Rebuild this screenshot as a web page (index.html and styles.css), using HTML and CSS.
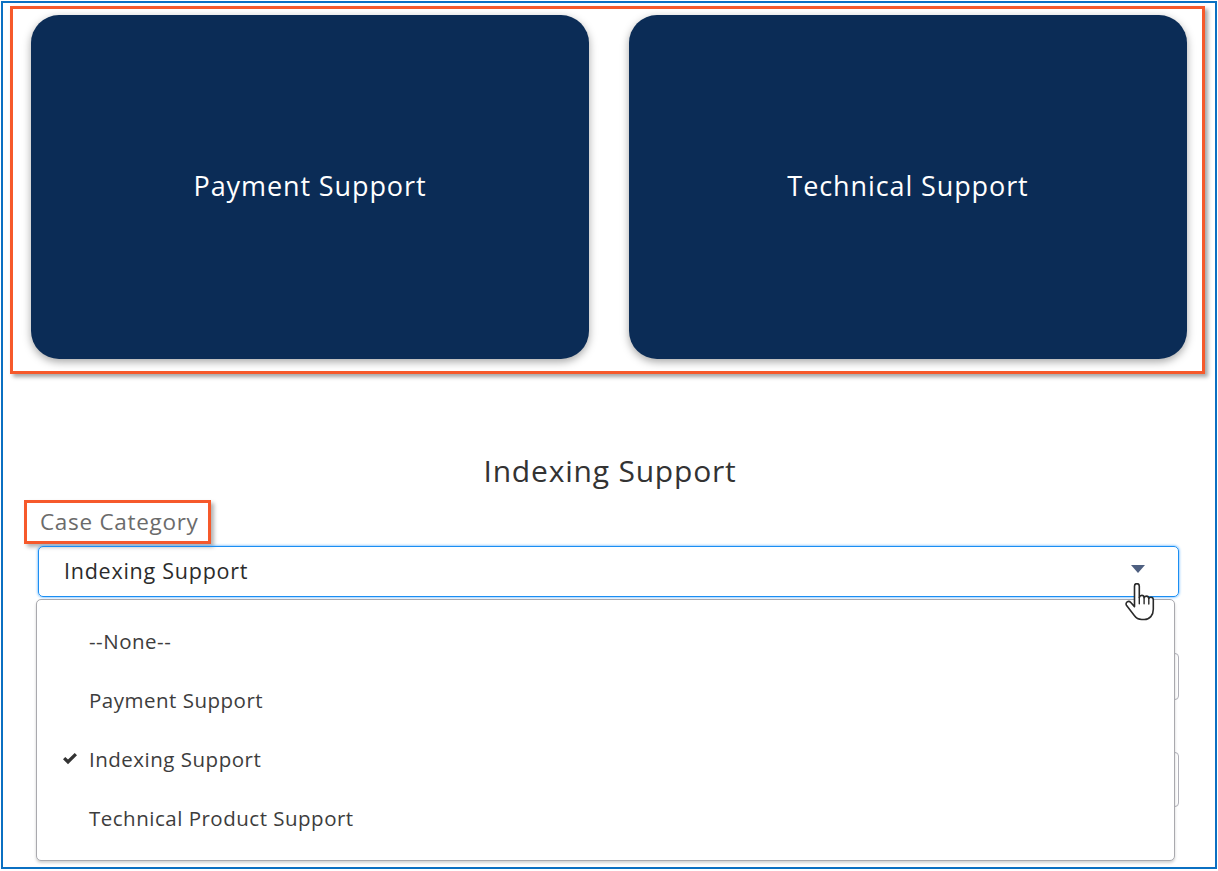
FILE: index.html
```html
<!DOCTYPE html>
<html lang="en">
<head>
<meta charset="utf-8">
<title>Case Category</title>
<link rel="stylesheet" href="styles.css">
</head>
<body>
<div class="frame">
  <div class="highlight">
    <div class="tiles">
      <div class="tile">Payment Support</div>
      <div class="tile">Technical Support</div>
    </div>
  </div>

  <h2 class="title">Indexing Support</h2>

  <div class="label-box"><span class="label">Case Category</span></div>

  <div class="form">
    <div class="select">
      <span class="select-value">Indexing Support</span>
      <svg class="caret" width="14" height="9" viewBox="0 0 14 9"><path d="M0 0H14L7 8Z" fill="#4e5f80"/></svg>
    </div>
    <div class="field field-1"></div>
    <div class="field field-2"></div>

    <ul class="menu">
      <li class="option">--None--</li>
      <li class="option">Payment Support</li>
      <li class="option selected"><svg class="check" width="16" height="13" viewBox="0 0 16 13"><path d="M1 7.2 L3.3 4.9 L6 7.6 L12.7 0.9 L15 3.2 L6 12.2 Z" fill="#333"/></svg>Indexing Support</li>
      <li class="option">Technical Product Support</li>
    </ul>

    <svg class="cursor" width="30" height="40" viewBox="0 0 30 40">
      <path d="M9.5 3.2c0-1.6 1.1-2.6 2.4-2.6s2.4 1 2.4 2.6v11.2c0.4-1.3 1.4-2 2.5-2s2.2 0.8 2.3 2.2c0.5-1 1.4-1.5 2.4-1.5 1.2 0 2.2 0.9 2.3 2.3 0.5-0.8 1.3-1.2 2.1-1.2 1.4 0 2.4 1.1 2.4 2.6v9.5c0 6-3.6 10.2-9 10.2h-2.6c-3.4 0-5.7-1.5-7.6-4.2L1.6 22.6c-0.9-1.3-0.6-2.9 0.6-3.7 1.2-0.8 2.6-0.5 3.6 0.6l3.7 4.1Z" fill="#fff" stroke="#2a2a2a" stroke-width="1.6" stroke-linejoin="round"/>
      <path d="M14.3 14.4v6.4M19.1 14.6v6.2M23.8 15.4v5.6" stroke="#2a2a2a" stroke-width="1.4" stroke-linecap="round"/>
    </svg>
  </div>
</div>
</body>
</html>
```

FILE: styles.css
```css
* { box-sizing: border-box; }

html, body {
  margin: 0;
  padding: 0;
  background: #ffffff;
}

body {
  font-family: "Open Sans", "Noto Sans", sans-serif;
  color: #333;
}

.frame {
  width: 1216px;
  height: 868px;
  margin: 1px 0 0 1px;
  border: 2px solid #0b70c2;
  overflow: hidden;
}

.highlight {
  width: 1195px;
  height: 368px;
  margin: 3px 0 0 7px;
  border: 3px solid #f6592b;
  box-shadow: 3px 3px 4px rgba(0, 0, 0, 0.35);
  padding: 6px 15px 0 18px;
}

.tiles {
  display: flex;
  gap: 40px;
}

.tile {
  flex: 0 0 558px;
  height: 344px;
  border-radius: 28px;
  background: #0b2c56;
  box-shadow: 0 3px 8px rgba(0, 0, 0, 0.35);
  display: flex;
  align-items: center;
  justify-content: center;
  color: #ffffff;
  font-size: 27px;
  font-weight: 500;
  letter-spacing: 0.9px;
  padding-bottom: 3px;
}

.title {
  margin: 80px 0 0;
  height: 46px;
  line-height: 34px;
  text-align: center;
  font-size: 30px;
  font-weight: 400;
  letter-spacing: 0.8px;
  color: #333;
  padding-left: 2px;
}

.label-box {
  width: 187px;
  height: 44px;
  margin-left: 21px;
  border: 3px solid #f6592b;
  box-shadow: 3px 3px 4px rgba(0, 0, 0, 0.3);
  padding-left: 13px;
  display: flex;
  align-items: center;
}

.label {
  font-size: 22.5px;
  letter-spacing: 0.7px;
  color: #6b6b6b;
  padding-bottom: 2px;
}

.form {
  position: relative;
  margin: 2px 0 0 35px;
  width: 1141px;
}

.select {
  height: 51px;
  border: 1px solid #1b8ef2;
  border-radius: 5px;
  box-shadow: 0 0 3px #3aa0ff;
  display: flex;
  align-items: center;
  justify-content: space-between;
  padding: 0 33px 3px 25px;
}

.select-value {
  font-size: 21.5px;
  letter-spacing: 0.75px;
  color: #2b2b2b;
}

.caret {
  display: block;
  margin-top: -2px;
}

.field {
  border: 1px solid #b0b0b8;
  border-radius: 4px;
}

.field-1 {
  height: 47px;
  margin-top: 56px;
}

.field-2 {
  height: 55px;
  margin-top: 52px;
}

.menu {
  position: absolute;
  top: 53px;
  left: -2px;
  width: 1139px;
  height: 262px;
  margin: 0;
  padding: 11px 0 0;
  list-style: none;
  background: #ffffff;
  border: 1px solid #a9a9ae;
  border-radius: 5px;
  box-shadow: 0 2px 3px rgba(0, 0, 0, 0.18);
}

.option {
  height: 59px;
  display: flex;
  align-items: center;
  padding-left: 52px;
  font-size: 20.5px;
  letter-spacing: 0.5px;
  color: #3d3d3d;
}

.option.selected {
  padding-left: 25px;
}

.check {
  display: block;
  margin-right: 11px;
}

.cursor {
  position: absolute;
  top: 37px;
  left: 1087px;
}
```
